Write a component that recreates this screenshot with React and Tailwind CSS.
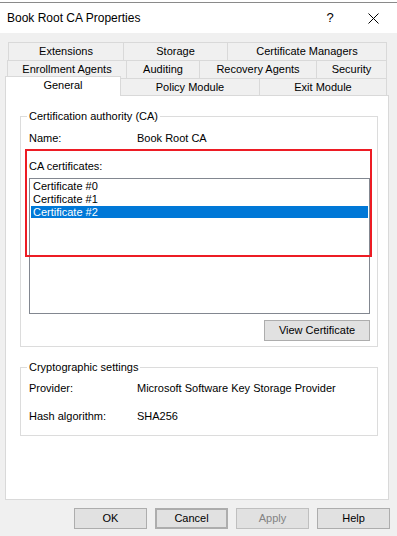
const font = { fontFamily: '"Liberation Sans", Arial, sans-serif' };

function Tab({ label, w, active }) {
  return (
    <div
      className={
        'flex items-center justify-center border border-b-0 border-[#d9d9d9] -ml-px first:ml-0 ' +
        w +
        (active ? ' bg-white h-[20px] relative z-10 -mb-px pb-[3px]' : ' bg-[#f0f0f0] h-[18px]')
      }
    >
      {label}
    </div>
  );
}

function Button({ children, className = '' }) {
  return (
    <div
      className={
        'w-[73px] h-[21px] flex items-center justify-center bg-[#e1e1e1] border border-[#adadad] ' + className
      }
    >
      {children}
    </div>
  );
}

function Group({ title, children, className = '' }) {
  return (
    <fieldset className={'border border-[#dcdcdc] ml-[14px] w-[358px] ' + className}>
      <legend className="ml-[6px] px-[2px] leading-[13px]">{title}</legend>
      {children}
    </fieldset>
  );
}

export default function App() {
  return (
    <div className="w-[397px] h-[536px] bg-[#f0f0f0] text-[11px] text-black flex flex-col overflow-hidden" style={font}>
      {/* Title bar */}
      <div className="bg-white h-[2px]" />
      <div className="bg-white h-[31px] border-t border-[#8a8a8a] flex items-center">
        <span className="ml-[7px] text-[12px] flex-1">Book Root CA Properties</span>
        <span className="text-[13px] w-[20px] text-center mr-[28px]">?</span>
        <svg width="11" height="11" viewBox="0 0 11 11" className="mr-[18px]">
          <path d="M0.5 0.5L10.5 10.5M10.5 0.5L0.5 10.5" stroke="#000" strokeWidth="1" />
        </svg>
      </div>

      {/* Tabs */}
      <div className="pt-[9px] flex flex-col">
        <div className="flex ml-[8px] h-[18px]">
          <Tab label="Extensions" w="w-[116px]" />
          <Tab label="Storage" w="w-[105px]" />
          <Tab label="Certificate Managers" w="w-[160px]" />
        </div>
        <div className="flex ml-[7px] h-[18px]">
          <Tab label="Enrollment Agents" w="w-[120px]" />
          <Tab label="Auditing" w="w-[74px]" />
          <Tab label="Recovery Agents" w="w-[118px]" />
          <Tab label="Security" w="w-[71px]" />
        </div>
        <div className="flex items-end ml-[5px] h-[19px] -mt-[2px]">
          <Tab label="General" w="w-[116px]" active />
          <div className="flex h-[17px]">
            <div className="w-[140px] -ml-px flex items-center justify-center border border-b-0 border-[#d9d9d9]">Policy Module</div>
            <div className="w-[128px] -ml-px flex items-center justify-center border border-b-0 border-[#d9d9d9]">Exit Module</div>
          </div>
        </div>
      </div>

      {/* Panel */}
      <div className="relative ml-[5px] w-[384px] h-[405px] bg-white border border-[#d9d9d9] pt-[14px]">
        <Group title="Certification authority (CA)" className="pb-[5px]">
          <div className="flex pl-[8px] mt-[9px] h-[13px] items-center">
            <span className="w-[108px]">Name:</span>
            <span>Book Root CA</span>
          </div>
          <div className="pl-[8px] mt-[15px] h-[13px] flex items-center">CA certificates:</div>
          <div className="ml-[8px] mt-[5px] w-[341px] h-[136px] border border-[#828790] p-px leading-[13px]">
            <div className="h-[13px] pl-[2px]">Certificate #0</div>
            <div className="h-[13px] pl-[2px]">Certificate #1</div>
            <div className="h-[12px] pl-[2px] bg-[#0078d7] text-white">Certificate #2</div>
          </div>
          <div className="flex justify-end mr-[7px] mt-[6px]">
            <Button className="w-[106px]">View Certificate</Button>
          </div>
        </Group>

        <Group title="Cryptographic settings" className="mt-[14px] h-[75px]">
          <div className="flex pl-[8px] mt-[8px] h-[13px] items-center">
            <span className="w-[108px]">Provider:</span>
            <span>Microsoft Software Key Storage Provider</span>
          </div>
          <div className="flex pl-[8px] mt-[15px] h-[13px] items-center">
            <span className="w-[108px]">Hash algorithm:</span>
            <span>SHA256</span>
          </div>
        </Group>

        {/* Annotation highlight */}
        <div className="absolute left-[19px] top-[53px] w-[347px] h-[108px] border-2 border-[#ed1c24]" />
      </div>

      {/* Buttons */}
      <div className="flex gap-[8px] ml-[74px] mt-[8px]">
        <Button>OK</Button>
        <Button className="border-2 border-[#0078d7]">Cancel</Button>
        <Button className="bg-[#cccccc] border-[#bfbfbf] text-[#838383]">Apply</Button>
        <Button>Help</Button>
      </div>
    </div>
  );
}
